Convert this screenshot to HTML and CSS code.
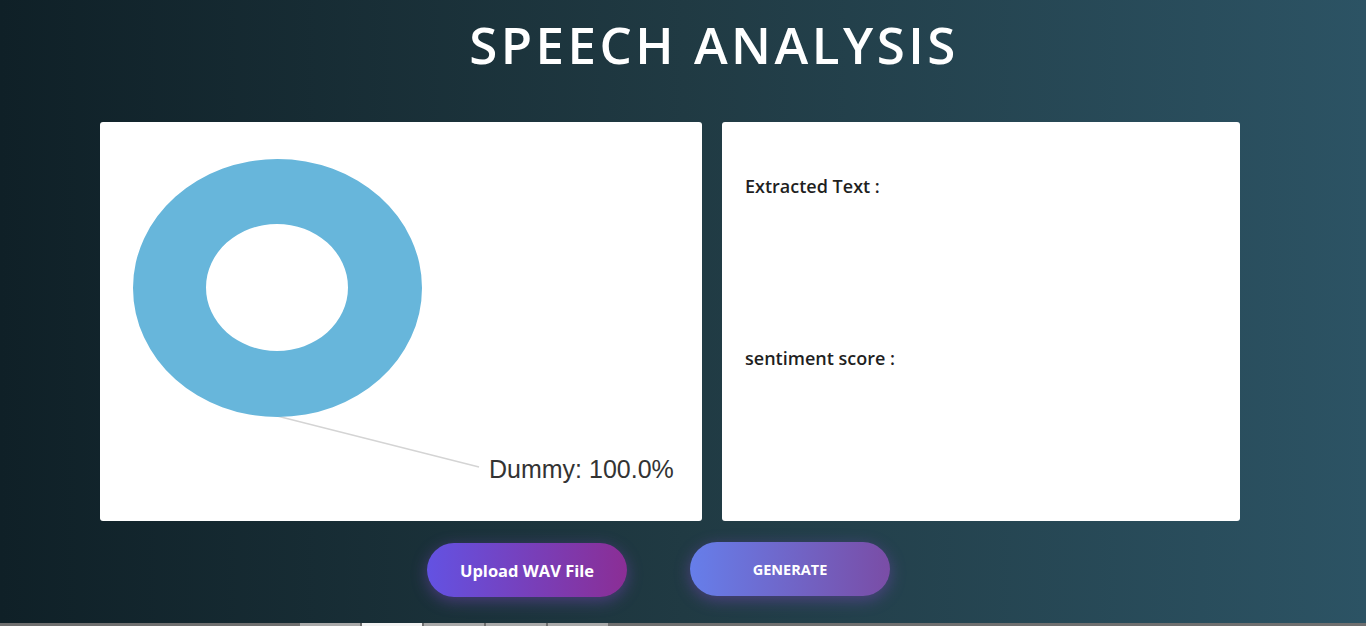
FILE: index.html
```html
<!DOCTYPE html>
<html lang="en">
<head>
  <meta charset="UTF-8" />
  <meta name="viewport" content="width=device-width, initial-scale=1.0"/>
  <title>Speech Analysis</title>
  <link rel="stylesheet" href="styles.css">
</head>
<body>
  <div class="page">
    <h1 class="title">SPEECH ANALYSIS</h1>

    <div class="panels">
      <div class="card chart-card">
        <svg class="chart" width="602" height="399" viewBox="0 0 602 399">
          <line x1="177" y1="294" x2="379" y2="345" stroke="#d4d4d4" stroke-width="1.3"/>
          <path fill="#67b6db" fill-rule="evenodd"
            d="M33 166a144.5 129 0 1 0 289 0a144.5 129 0 1 0 -289 0z
               M106 165.5a71 63.5 0 1 0 142 0a71 63.5 0 1 0 -142 0z"/>
          <text x="389" y="356" class="chart-label">Dummy: 100.0%</text>
        </svg>
      </div>

      <div class="card text-card">
        <div class="field extracted">Extracted Text :</div>
        <div class="field">sentiment score :</div>
      </div>
    </div>

    <div class="actions">
      <button class="btn upload">Upload WAV File</button>
      <button class="btn generate">GENERATE</button>
    </div>
  </div>

  <div class="tabbar">
    <span class="tab"></span>
    <span class="tab active"></span>
    <span class="tab"></span>
    <span class="tab"></span>
    <span class="tab"></span>
  </div>
</body>
</html>
```

FILE: styles.css
```css
* {
  margin: 0;
  padding: 0;
  box-sizing: border-box;
}

html, body {
  height: 100%;
  overflow: hidden;
}

body {
  background: linear-gradient(to right, #0f2027, #203a43, #2c5364);
  font-family: "Open Sans", "Noto Sans", sans-serif;
  color: #fff;
  display: flex;
  flex-direction: column;
}

.page {
  flex: 1;
  display: flex;
  flex-direction: column;
  align-items: center;
}

.title {
  margin-top: 9px;
  font-size: 51px;
  line-height: 70px;
  font-weight: 600;
  letter-spacing: 3.5px;
  padding-left: 62px;
}

.panels {
  display: flex;
  gap: 20px;
  margin-top: 43px;
  padding-right: 26px;
}

.card {
  background: #fff;
  border-radius: 3px;
  height: 399px;
}

.chart-card {
  width: 602px;
  overflow: hidden;
}

.chart {
  display: block;
}

.chart-label {
  font-family: "Liberation Sans", Arial, sans-serif;
  font-size: 25px;
  fill: #333;
}

.text-card {
  width: 518px;
  padding: 52px 23px 0;
  color: #1f1f1f;
}

.field {
  font-size: 18px;
  font-weight: 600;
  line-height: 24px;
}

.extracted {
  height: 172px;
}

.actions {
  display: flex;
  gap: 63px;
  margin-top: 21px;
  padding-right: 49px;
}

.btn {
  width: 200px;
  height: 54px;
  border: none;
  border-radius: 27px;
  color: #fff;
  font-family: "Open Sans", "Noto Sans", sans-serif;
  font-weight: 700;
  cursor: pointer;
  box-shadow: 0 4px 16px rgba(130, 70, 200, 0.45);
}

.upload {
  font-size: 16.5px;
  margin-top: 1px;
  background: linear-gradient(to right, #6352e2, #8b2e95);
}

.generate {
  font-size: 14.5px;
  background: linear-gradient(to right, #667eea, #7a4da6);
}

.tabbar {
  height: 3px;
  background: #6f6f6f;
  display: flex;
  padding-left: 300px;
  gap: 2px;
}

.tab {
  width: 60px;
  height: 3px;
  background: #a9a9a9;
}

.tab.active {
  background: #f2f2f2;
}
```
